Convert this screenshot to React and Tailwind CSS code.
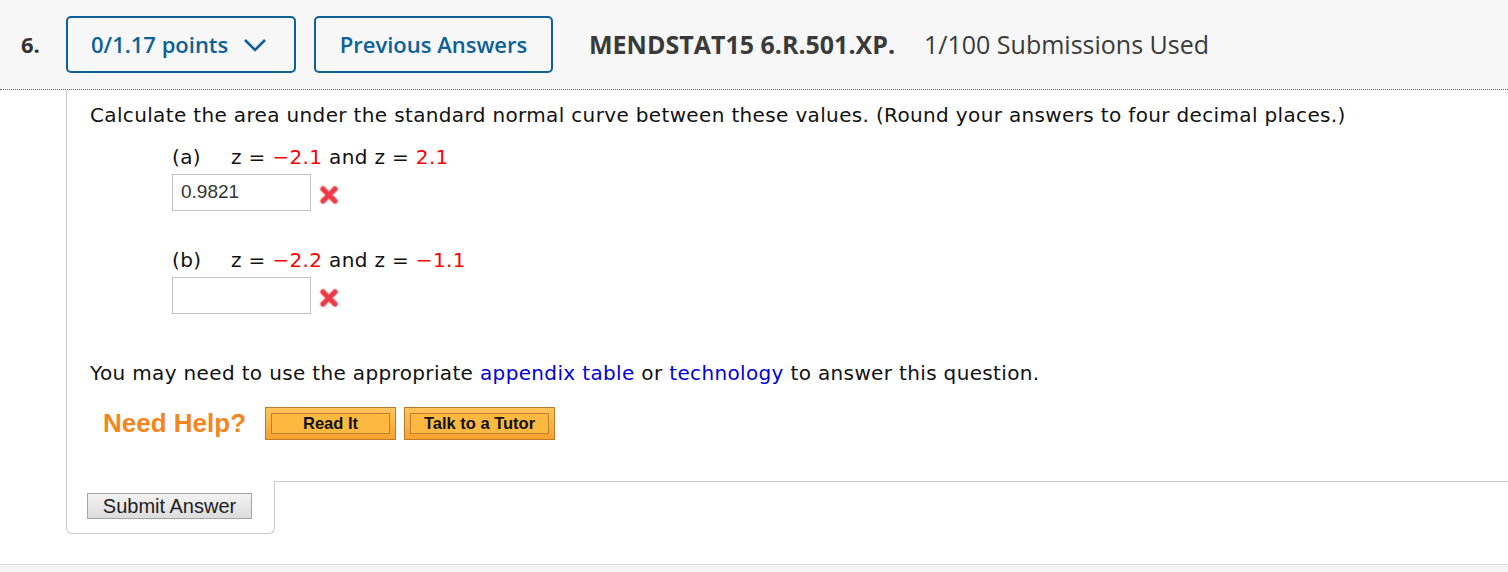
import React from "react";

const head = { fontFamily: '"Open Sans", "Noto Sans", sans-serif' };
const verd = { fontFamily: '"DejaVu Sans", Verdana, sans-serif' };
const arial = { fontFamily: '"Liberation Sans", Arial, sans-serif' };

function XMark() {
  return (
    <svg width="22" height="22" viewBox="0 0 22 22" className="ml-[7px] mt-[4px]">
      <path d="M5 5 L17 17 M17 5 L5 17" stroke="#f8a0a6" strokeWidth="6.5" strokeLinecap="round" />
      <path d="M5 5 L17 17 M17 5 L5 17" stroke="#ec3a47" strokeWidth="4.5" strokeLinecap="round" />
    </svg>
  );
}

function OrangeBtn({ label, w }) {
  return (
    <div className={`${w} h-[33px] p-[5px] border border-[#bf7a2c] bg-gradient-to-b from-[#ffc35a] to-[#f9a22c]`}>
      <div className="h-full border border-[#b98130] bg-[#fdb840] flex items-center justify-center text-[16.5px] font-bold text-[#111]"
        style={arial}>
        {label}
      </div>
    </div>
  );
}

export default function App() {
  return (
    <div className="w-[1508px] h-[572px] bg-white overflow-hidden flex flex-col">
      {/* header */}
      <div className="h-[90px] shrink-0 bg-[#f7f7f7] border-b border-dotted border-[#666] flex items-center pl-[21px]" style={head}>
        <span className="text-[22px] font-bold text-[#333] w-[45px]">6.</span>
        <div className="w-[230px] h-[57px] border-2 border-[#0b6198] rounded-[5px] flex items-center pl-[23px] gap-[15px] text-[#0b6198]">
          <span className="text-[22px] font-semibold">0/1.17 points</span>
          <svg width="24" height="16" viewBox="0 0 24 16">
            <path d="M2 3 L12 13 L22 3" fill="none" stroke="#0b6198" strokeWidth="2.6" />
          </svg>
        </div>
        <div className="ml-[18px] w-[239px] h-[57px] border-2 border-[#0b6198] rounded-[5px] flex items-center justify-center text-[22px] font-semibold text-[#0b6198]">
          Previous Answers
        </div>
        <span className="ml-[36px] text-[25px] font-bold text-[#3a3a3a]">MENDSTAT15 6.R.501.XP.</span>
        <span className="ml-[29px] text-[25px] text-[#3a3a3a]">1/100 Submissions Used</span>
      </div>

      {/* body */}
      <div className="ml-[66px] flex flex-col">
        <div className="border-l border-[#cccccc] pl-[23px] pt-[13px] h-[391px] text-[20px] tracking-[0.35px] text-[#111]" style={verd}>
          <p className="leading-[24px]">
            Calculate the area under the standard normal curve between these values. (Round your answers to four decimal places.)
          </p>

          <div className="ml-[82px] mt-[18px] leading-[24px] flex">
            <span className="w-[59px]">(a)</span>
            <span>z = <span className="text-[#ff0000]">−2.1</span> and z = <span className="text-[#ff0000]">2.1</span></span>
          </div>
          <div className="ml-[82px] mt-[5px] flex items-center">
            <div className="w-[139px] h-[37px] border border-[#c4c4c4] flex items-center pl-[8px] text-[19px] tracking-normal text-[#333]" style={arial}>
              0.9821
            </div>
            <XMark />
          </div>

          <div className="ml-[82px] mt-[37px] leading-[24px] flex">
            <span className="w-[59px]">(b)</span>
            <span>z = <span className="text-[#ff0000]">−2.2</span> and z = <span className="text-[#ff0000]">−1.1</span></span>
          </div>
          <div className="ml-[82px] mt-[5px] flex items-center">
            <div className="w-[139px] h-[37px] border border-[#c4c4c4]" />
            <XMark />
          </div>

          <p className="mt-[47px] leading-[24px]">
            You may need to use the appropriate <span className="text-[#0000dd]">appendix table</span> or{" "}
            <span className="text-[#0000dd]">technology</span> to answer this question.
          </p>

          <div className="mt-[19px] flex items-center tracking-normal">
            <span className="ml-[13px] text-[26px] font-bold text-[#f4861c] w-[162px]" style={arial}>Need Help?</span>
            <OrangeBtn label="Read It" w="w-[131px]" />
            <div className="w-[8px]" />
            <OrangeBtn label="Talk to a Tutor" w="w-[151px]" />
          </div>
        </div>

        {/* submit row */}
        <div className="flex h-[53px]">
          <div className="w-[209px] border-l border-r border-b border-[#cccccc] rounded-b-[6px] pl-[20px] pt-[12px]">
            <button className="w-[165px] h-[26px] border border-[#a5a5a5] bg-gradient-to-b from-[#f3f3f3] to-[#dcdcdc] text-[20px] text-[#222] leading-none" style={arial}>
              Submit Answer
            </button>
          </div>
          <div className="flex-1 border-t border-[#cccccc]" />
        </div>
      </div>

      <div className="mt-auto h-[8px] bg-[#f5f5f5] border-t border-[#dddddd]" />
    </div>
  );
}
